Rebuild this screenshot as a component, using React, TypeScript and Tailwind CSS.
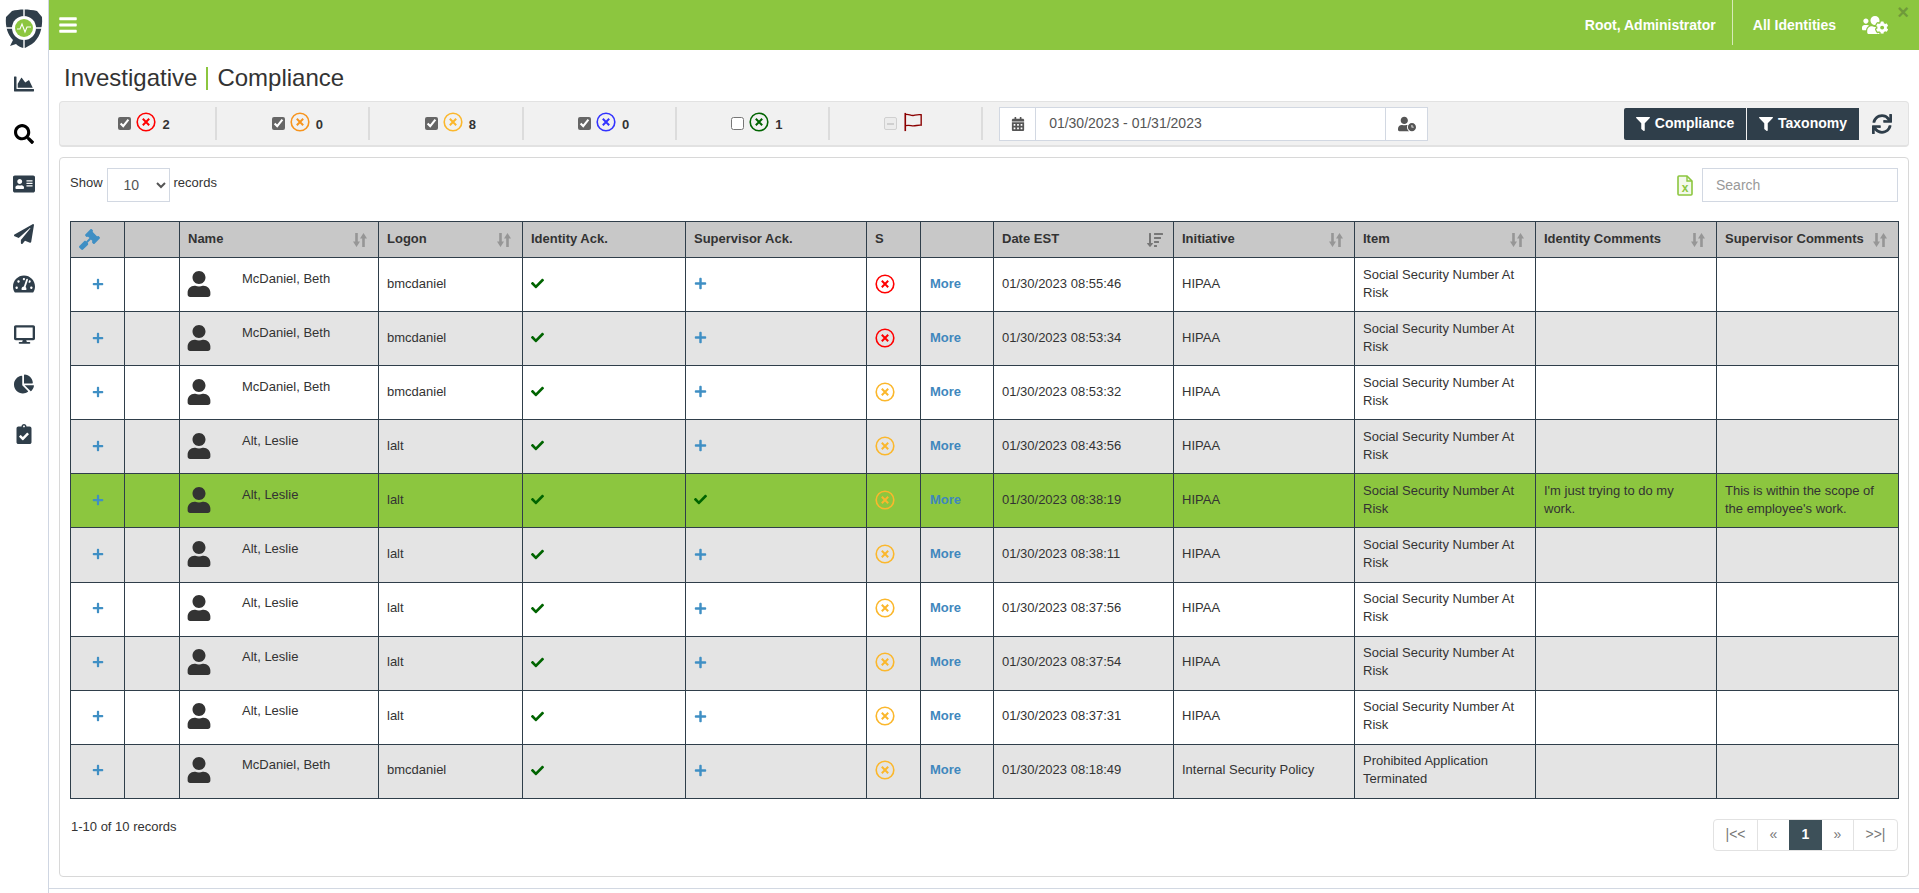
import {
  FaAddressCard,
  FaBars,
  FaCalendarAlt,
  FaChartArea,
  FaChartPie,
  FaCheck,
  FaClipboardCheck,
  FaDesktop,
  FaFilter,
  FaGavel,
  FaPaperPlane,
  FaPlus,
  FaSearch,
  FaSortAmountDown,
  FaSync,
  FaTachometerAlt,
  FaUser,
  FaUserClock,
  FaUsersCog,
} from 'react-icons/fa';

const RED = '#ff0000';
const ORANGE = '#f7941d';
const YELLOW = '#fbb72c';
const BLUE = '#3333ff';
const GREEN = '#006400';

type Row = {
  name: string;
  logon: string;
  supervisorAck?: boolean;
  status: string;
  date: string;
  initiative: string;
  item: string;
  identityComment?: string;
  supervisorComment?: string;
  selected?: boolean;
};

const ssn = 'Social Security Number At Risk';

const rows: Row[] = [
  { name: 'McDaniel, Beth', logon: 'bmcdaniel', status: RED, date: '01/30/2023 08:55:46', initiative: 'HIPAA', item: ssn },
  { name: 'McDaniel, Beth', logon: 'bmcdaniel', status: RED, date: '01/30/2023 08:53:34', initiative: 'HIPAA', item: ssn },
  { name: 'McDaniel, Beth', logon: 'bmcdaniel', status: YELLOW, date: '01/30/2023 08:53:32', initiative: 'HIPAA', item: ssn },
  { name: 'Alt, Leslie', logon: 'lalt', status: YELLOW, date: '01/30/2023 08:43:56', initiative: 'HIPAA', item: ssn },
  {
    name: 'Alt, Leslie',
    logon: 'lalt',
    supervisorAck: true,
    status: YELLOW,
    date: '01/30/2023 08:38:19',
    initiative: 'HIPAA',
    item: ssn,
    identityComment: "I'm just trying to do my work.",
    supervisorComment: "This is within the scope of the employee's work.",
    selected: true,
  },
  { name: 'Alt, Leslie', logon: 'lalt', status: YELLOW, date: '01/30/2023 08:38:11', initiative: 'HIPAA', item: ssn },
  { name: 'Alt, Leslie', logon: 'lalt', status: YELLOW, date: '01/30/2023 08:37:56', initiative: 'HIPAA', item: ssn },
  { name: 'Alt, Leslie', logon: 'lalt', status: YELLOW, date: '01/30/2023 08:37:54', initiative: 'HIPAA', item: ssn },
  { name: 'Alt, Leslie', logon: 'lalt', status: YELLOW, date: '01/30/2023 08:37:31', initiative: 'HIPAA', item: ssn },
  {
    name: 'McDaniel, Beth',
    logon: 'bmcdaniel',
    status: YELLOW,
    date: '01/30/2023 08:18:49',
    initiative: 'Internal Security Policy',
    item: 'Prohibited Application Terminated',
  },
];

function Logo() {
  return (
    <svg width="38" height="40" viewBox="0 0 38 40">
      <path d="M7 2 C14 0 24 0 32 2 L37 8 C38 20 34 30 27 35 L20 39 C16 39 13 37 11 35 L5 37 L8 31 C3 26 0 18 1 8 Z" fill="#2f3e4a" />
      <circle cx="19" cy="19" r="12" fill="#fff" />
      <circle cx="19" cy="19" r="9" fill="#8cc63f" />
      <path d="M19 0 V7 M19 31 V40 M0 19 H7 M31 19 H38" stroke="#fff" strokeWidth="1.4" />
      <path d="M12 20 H15 L17 15 L20 23 L22 18 H26" fill="none" stroke="#fff" strokeWidth="1.1" />
    </svg>
  );
}

function XCircle({ color, size = 20, className = '' }: { color: string; size?: number; className?: string }) {
  return (
    <svg width={size} height={size} viewBox="0 0 20 20" className={`shrink-0 ${className}`}>
      <circle cx="10" cy="10" r="8.8" fill="none" stroke={color} strokeWidth="1.6" />
      <path d="M6.8 6.8 L13.2 13.2 M13.2 6.8 L6.8 13.2" stroke={color} strokeWidth="2" />
    </svg>
  );
}

function SortIcon() {
  return (
    <svg width="14" height="14" viewBox="0 0 14 14" className="absolute right-[11px] top-[11px]">
      <path d="M2.2 0 H4.8 V8.5 H7 L3.5 14 L0 8.5 H2.2 Z" fill="#969696" />
      <path d="M9.2 14 H11.8 V5.5 H14 L10.5 0 L7 5.5 H9.2 Z" fill="#969696" />
    </svg>
  );
}

function Filter({ color, count, checked = true }: { color: string; count: string; checked?: boolean }) {
  return (
    <div className="w-[153.2px] h-[33px] flex items-center justify-center border-r-2 border-[#dcdcdc] pl-[9px]">
      <input type="checkbox" readOnly checked={checked} className="w-[13px] h-[13px] accent-[#666666] mr-[5px] mb-[1px]" />
      <XCircle color={color} className="mb-[3px]" />
      <span className="ml-[6px] mt-[2px] font-bold text-[13px] text-[#333]">{count}</span>
    </div>
  );
}

function Th({ label, sort, className = '' }: { label?: string; sort?: boolean; className?: string }) {
  return (
    <th className={`relative border border-[#2f3e4a] bg-[#c8c8c8] pl-[8px] pb-[2px] text-left text-[13px] font-bold text-[#333] ${className}`}>
      {label}
      {sort && <SortIcon />}
    </th>
  );
}

function Td({ children, className = '' }: { children?: React.ReactNode; className?: string }) {
  return <td className={`border border-[#2f3e4a] pl-[8px] pr-[20px] pb-[2px] text-[13px] leading-[18px] ${className}`}>{children}</td>;
}

export default function App() {
  const sideIcons = [
    { icon: <FaChartArea size={20} />, color: 'text-[#2f3e4a]' },
    { icon: <FaSearch size={20} />, color: 'text-black' },
    { icon: <FaAddressCard size={22} />, color: 'text-[#2f3e4a]' },
    { icon: <FaPaperPlane size={20} />, color: 'text-[#2f3e4a]' },
    { icon: <FaTachometerAlt size={22} />, color: 'text-[#2f3e4a]' },
    { icon: <FaDesktop size={21} />, color: 'text-[#2f3e4a]' },
    { icon: <FaChartPie size={20} />, color: 'text-[#2f3e4a]' },
    { icon: <FaClipboardCheck size={20} />, color: 'text-[#2f3e4a]' },
  ];

  return (
    <div className="flex h-screen w-full overflow-hidden bg-white text-[13px] text-[#333] font-['Liberation_Sans',Arial,sans-serif]">
      <aside className="w-[49px] shrink-0 border-r border-[#cfd6e2]">
        <div className="h-[50px] flex items-center justify-center pt-[8px]">
          <Logo />
        </div>
        <div className="pt-[9px]">
          {sideIcons.map((s, i) => (
            <div key={i} className={`h-[50px] flex items-center justify-center ${s.color}`}>
              {s.icon}
            </div>
          ))}
        </div>
      </aside>

      <div className="flex-1 min-w-0 flex flex-col">
        <header className="relative h-[50px] shrink-0 bg-[#8cc63f] flex items-center text-white">
          <FaBars size={20} className="ml-[9px]" />
          <div className="ml-auto flex items-center h-full mr-[31px]">
            <span className="font-bold text-[14px]">Root, Administrator</span>
            <div className="w-px h-[45px] bg-[#d6eab8] ml-[16px] mr-[20px] -mt-[5px]" />
            <span className="font-bold text-[14px]">All Identities</span>
            <FaUsersCog size={26} className="ml-[26px]" />
          </div>
          <span className="absolute right-[10px] top-[2px] text-[20px] font-bold leading-[20px] text-[#6f9a3a]">×</span>
        </header>

        <main className="flex-1 min-h-0 px-[10px]">
          <h1 className="h-[51px] pl-[5px] pt-[5px] flex items-center text-[24px] font-normal text-[#333]">
            Investigative
            <span className="mx-[9px] w-[2px] h-[23px] bg-[#8cc63f]" />
            Compliance
          </h1>

          <div className="h-[46px] flex items-center rounded-[4px] border border-[#e2e2e2] border-b-2 bg-[#f1f1f1] pl-[4px] pr-[16px]">
            <Filter color={RED} count="2" />
            <Filter color={ORANGE} count="0" />
            <Filter color={YELLOW} count="8" />
            <Filter color={BLUE} count="0" />
            <Filter color={GREEN} count="1" checked={false} />
            <div className="w-[153.2px] h-[33px] flex items-center justify-center border-r-2 border-[#dcdcdc] pr-[4px]">
              <span className="w-[13px] h-[13px] rounded-[2px] border border-[#d0d0d0] bg-[#ececec] flex items-center justify-center mr-[6px]">
                <span className="block w-[7px] h-[2px] bg-[#cfcfcf]" />
              </span>
              <svg width="20" height="20" viewBox="0 0 20 22" className="mb-[3px]">
                <path d="M1.5 1 V21" stroke="#8b0000" strokeWidth="1.8" />
                <path d="M1.5 3 C5 1.5 8 5 12 3.5 C14 3 16 2.5 19 3 V14.5 C15 14 12 16 8 15 C6 14.5 4 14.5 1.5 15" fill="none" stroke="#8b0000" strokeWidth="1.5" />
              </svg>
            </div>

            <div className="ml-[16px] flex h-[34px] w-[429px] border border-[#d2d8e2] bg-white text-[#555]">
              <div className="w-[36px] flex items-center justify-center border-r border-[#d2d8e2]">
                <FaCalendarAlt size={14} />
              </div>
              <div className="flex-1 flex items-center pl-[13px] text-[14px]">01/30/2023 - 01/31/2023</div>
              <div className="w-[42px] flex items-center justify-center border-l border-[#d2d8e2]">
                <FaUserClock size={18} />
              </div>
            </div>

            <div className="ml-auto flex items-center text-white font-bold text-[14px]">
              <button className="h-[32px] w-[122px] rounded-l-[2px] bg-[#2f3e4a] flex items-center justify-center gap-[5px] mr-px">
                <FaFilter size={14} />
                Compliance
              </button>
              <button className="h-[32px] w-[112px] bg-[#2f3e4a] flex items-center justify-center gap-[5px]">
                <FaFilter size={14} />
                Taxonomy
              </button>
            </div>
            <FaSync size={20} className="ml-[13px] text-[#2f3e4a]" />
          </div>

          <section className="mt-[10px] h-[720px] rounded-[4px] border border-[#d8d8d8] px-[10px] pt-[10px]">
            <div className="flex items-center h-[34px]">
              <span className="mb-[5px]">Show</span>
              <select className="ml-[4px] w-[63px] h-[34px] border border-[#d2d8e2] bg-white pl-[12px] text-[14px] text-[#555]">
                <option>10</option>
              </select>
              <span className="ml-[4px] mb-[5px]">records</span>

              <svg width="16" height="21" viewBox="0 0 16 21" className="ml-auto">
                <path d="M1 2 Q1 1 2 1 H10 L15 6 V19 Q15 20 14 20 H2 Q1 20 1 19 Z" fill="#f4f9ec" stroke="#8cc63f" strokeWidth="1.6" />
                <path d="M10 1 V6 H15" fill="none" stroke="#8cc63f" strokeWidth="1.4" />
                <text x="8" y="17" textAnchor="middle" fontSize="12" fontWeight="700" fill="#8cc63f" fontFamily="Liberation Sans">x</text>
              </svg>
              <input
                placeholder="Search"
                className="ml-[9px] w-[196px] h-[34px] border border-[#d2d8e2] pl-[13px] text-[14px] placeholder:text-[#999] outline-none"
              />
            </div>

            <table className="mt-[19px] w-[1828px] table-fixed border-collapse">
              <colgroup>
                <col className="w-[54px]" />
                <col className="w-[55px]" />
                <col className="w-[199px]" />
                <col className="w-[144px]" />
                <col className="w-[163px]" />
                <col className="w-[181px]" />
                <col className="w-[54px]" />
                <col className="w-[73px]" />
                <col className="w-[180px]" />
                <col className="w-[181px]" />
                <col className="w-[181px]" />
                <col className="w-[181px]" />
                <col className="w-[182px]" />
              </colgroup>
              <thead>
                <tr className="h-[36px]">
                  <th className="border border-[#2f3e4a] bg-[#c8c8c8] pl-[8px]">
                    <FaGavel size={21} className="text-[#3f8fc4]" />
                  </th>
                  <Th />
                  <Th label="Name" sort />
                  <Th label="Logon" sort />
                  <Th label="Identity Ack." />
                  <Th label="Supervisor Ack." />
                  <Th label="S" />
                  <Th />
                  <th className="relative border border-[#2f3e4a] bg-[#c8c8c8] pl-[8px] pb-[2px] text-left text-[13px] font-bold text-[#333]">
                    Date EST
                    <FaSortAmountDown size={16} className="absolute right-[10px] top-[10px] text-[#777]" />
                  </th>
                  <Th label="Initiative" sort />
                  <Th label="Item" sort />
                  <Th label="Identity Comments" sort />
                  <Th label="Supervisor Comments" sort />
                </tr>
              </thead>
              <tbody>
                {rows.map((r, i) => {
                  const bg = r.selected ? 'bg-[#8cc63f]' : i % 2 === 1 ? 'bg-[#e4e4e4]' : 'bg-white';
                  return (
                    <tr key={i} className={`h-[54.1px] ${bg}`}>
                      <td className="border border-[#2f3e4a] pb-[2px]">
                        <FaPlus size={12} className="mx-auto text-[#3f8fc4]" />
                      </td>
                      <Td />
                      <Td className="!pl-[6px]">
                        <div className="flex items-center">
                          <FaUser size={26} className="text-[#333] shrink-0" />
                          <span className="ml-[30px] mb-[10px]">{r.name}</span>
                        </div>
                      </Td>
                      <Td>{r.logon}</Td>
                      <Td>
                        <FaCheck size={13} className="text-[#006400]" />
                      </Td>
                      <Td>
                        {r.supervisorAck ? (
                          <FaCheck size={13} className="text-[#006400]" />
                        ) : (
                          <FaPlus size={13} className="text-[#3f8fc4]" />
                        )}
                      </Td>
                      <Td className="!pl-[8px]">
                        <XCircle color={r.status} />
                      </Td>
                      <Td className="!pl-[9px] font-bold text-[#3f87bd]">More</Td>
                      <Td>{r.date}</Td>
                      <Td>{r.initiative}</Td>
                      <Td>{r.item}</Td>
                      <Td>{r.identityComment}</Td>
                      <Td>{r.supervisorComment}</Td>
                    </tr>
                  );
                })}
              </tbody>
            </table>

            <div className="mt-[20px] flex items-start justify-between">
              <span className="-mt-[2px] pl-[1px]">1-10 of 10 records</span>
              <div className="flex h-[32px] rounded-[4px] border border-[#e2e2e2] text-[#777] text-[14px]">
                <span className="w-[44px] flex items-center justify-center border-r border-[#e2e2e2]">|&lt;&lt;</span>
                <span className="w-[31px] flex items-center justify-center">«</span>
                <span className="w-[33px] flex items-center justify-center bg-[#3d5059] font-bold text-white">1</span>
                <span className="w-[32px] flex items-center justify-center border-r border-[#e2e2e2]">»</span>
                <span className="w-[43px] flex items-center justify-center">&gt;&gt;|</span>
              </div>
            </div>
          </section>

          <div className="-mx-[10px] mt-[11px] border-t border-[#d2d8e2]" />
        </main>
      </div>
    </div>
  );
}
